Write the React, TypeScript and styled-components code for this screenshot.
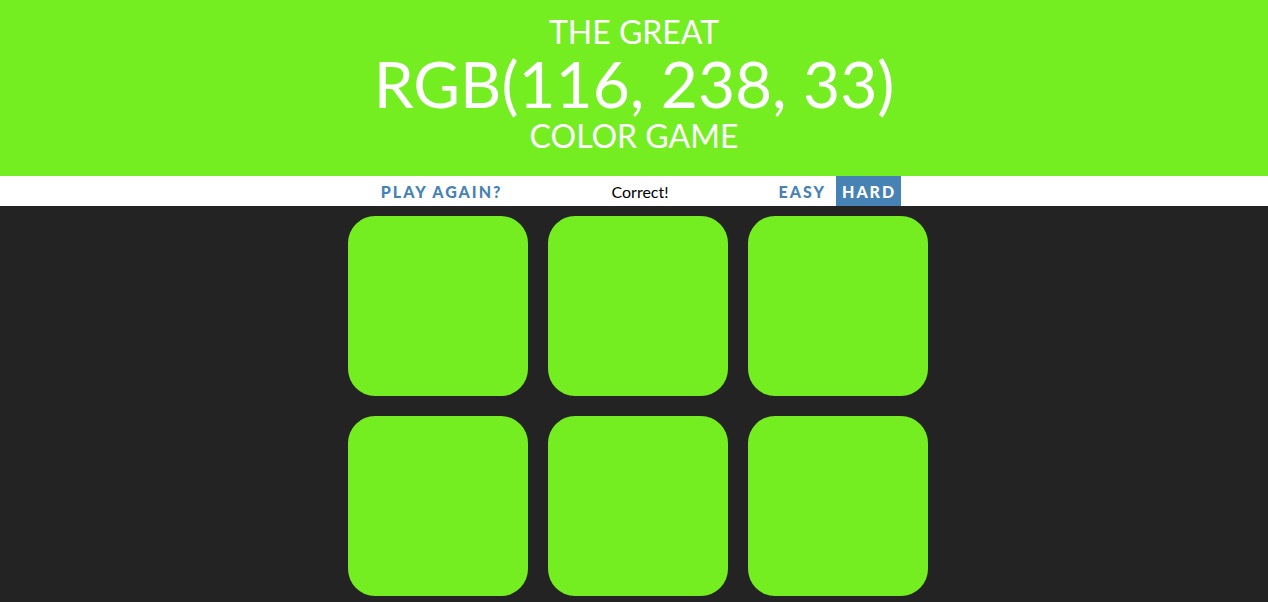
import React, { useState } from "react";
import styled, { createGlobalStyle } from "styled-components";

const target = "rgb(116, 238, 33)";
const colors = [target, target, target, target, target, target];

const GlobalStyle = createGlobalStyle`
  html, body {
    margin: 0;
    padding: 0;
    background: #232323;
    font-family: "Lato", "Noto Sans", sans-serif;
    overflow: hidden;
  }
`;

const Header = styled.h1<{ $bg: string }>`
  margin: 0;
  padding: 14px 0 23px;
  background: ${(props) => props.$bg};
  color: #ffffff;
  text-align: center;
  text-transform: uppercase;
  font-weight: 400;
  font-size: 32px;
  line-height: 1.1;
`;

const ColorDisplay = styled.span`
  display: block;
  font-size: 64px;
  line-height: 1.08;
`;

const Stripe = styled.div`
  height: 30px;
  background: #ffffff;
  display: flex;
  justify-content: center;
  align-items: stretch;
  padding-left: 8px;
`;

const StripeButton = styled.button<{ $selected?: boolean }>`
  border: none;
  outline: none;
  height: 100%;
  padding: 0 5px 0 6px;
  margin: 0;
  background: ${(props) => (props.$selected ? "steelblue" : "#ffffff")};
  color: ${(props) => (props.$selected ? "#ffffff" : "steelblue")};
  font-family: "Lato", "Noto Sans", sans-serif;
  font-size: 16px;
  font-weight: 900;
  letter-spacing: 2px;
  text-transform: uppercase;
  cursor: pointer;
`;

const Message = styled.span`
  display: inline-flex;
  align-items: center;
  justify-content: center;
  width: 265px;
  font-size: 16px;
  color: #000000;
`;

const ModeGroup = styled.div`
  display: flex;
  gap: 5px;
`;

const Board = styled.div`
  width: 580px;
  margin: 10px 0 0 calc(50% - 286px);
  display: grid;
  grid-template-columns: repeat(3, 180px);
  gap: 20px;
`;

const Square = styled.div<{ $color: string }>`
  width: 180px;
  height: 180px;
  border-radius: 15%;
  background: ${(props) => props.$color};
`;

export default function App() {
  const [mode, setMode] = useState<"easy" | "hard">("hard");

  return (
    <>
      <GlobalStyle />
      <Header $bg={target}>
        The Great
        <ColorDisplay>RGB(116, 238, 33)</ColorDisplay>
        Color Game
      </Header>
      <Stripe>
        <StripeButton>Play Again?</StripeButton>
        <Message>Correct!</Message>
        <ModeGroup>
          <StripeButton $selected={mode === "easy"} onClick={() => setMode("easy")}>
            Easy
          </StripeButton>
          <StripeButton $selected={mode === "hard"} onClick={() => setMode("hard")}>
            Hard
          </StripeButton>
        </ModeGroup>
      </Stripe>
      <Board>
        {colors.map((c, i) => (
          <Square key={i} $color={c} />
        ))}
      </Board>
    </>
  );
}
